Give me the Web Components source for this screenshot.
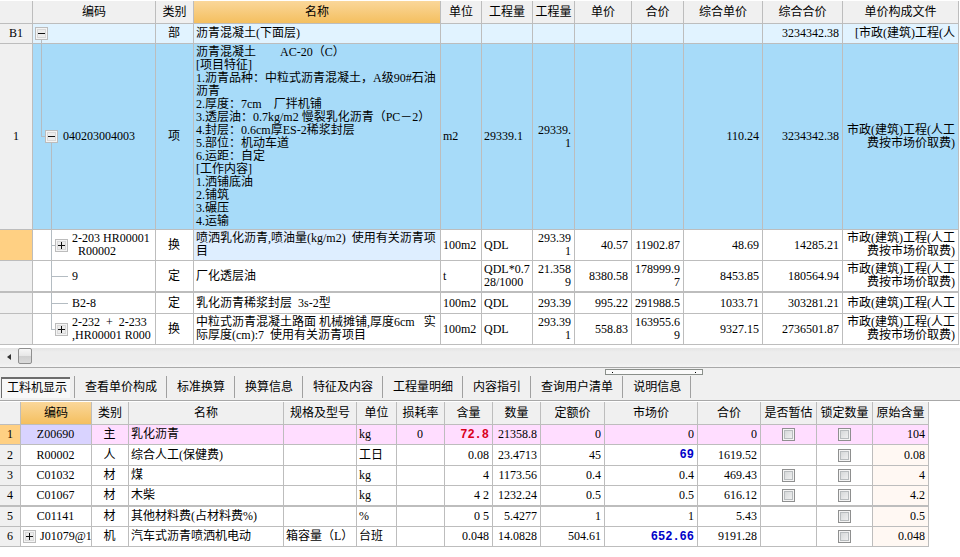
<!DOCTYPE html>
<html lang="zh-CN">
<head>
<meta charset="utf-8">
<title>工程量清单计价</title>
<style>
    body {
        margin: 0;
        background: #fff;
        color: #000;
        font: 12px/13px "Liberation Serif", "Noto Sans CJK SC", serif;
    }
</style>
</head>
<body>
<bill-grid></bill-grid>
<scroll-track></scroll-track>
<tab-panel>
    <tab-item active>工料机显示</tab-item>
    <tab-item>查看单价构成</tab-item>
    <tab-item>标准换算</tab-item>
    <tab-item>换算信息</tab-item>
    <tab-item>特征及内容</tab-item>
    <tab-item>工程量明细</tab-item>
    <tab-item>内容指引</tab-item>
    <tab-item>查询用户清单</tab-item>
    <tab-item>说明信息</tab-item>
</tab-panel>
<resource-grid></resource-grid>

<script>
// shared by both grids
const gridStyle = `
    :host {
        display: block;
    }
    table {
        table-layout: fixed;
        border-collapse: separate;
        border-spacing: 0;
    }
    th, td {
        box-sizing: border-box;
        padding: 0 3px 0 2px;
        border-right: 1px solid #bdbdbd;
        border-bottom: 1px solid #bdbdbd;
        overflow: hidden;
        white-space: pre;
        text-align: left;
        font-weight: normal;
        vertical-align: middle;
    }
    thead th {
        padding: 0;
        background: #f0f0f0;
        text-align: center;
    }
    thead th.current {
        background: linear-gradient(#fad79a, #f4bf5f);
    }
    tbody th {
        padding: 0;
        background: #f0f0f0;
        text-align: center;
    }
    .center { text-align: center; }
    .right { text-align: right; }
    tr.page td, tr.page th { border-bottom-width: 2px; }
`;

class TreeToggle extends HTMLElement {
    constructor() {
        super();
        this.attachShadow({ mode: 'open' });
    }

    connectedCallback() {
        const open = this.hasAttribute('open');
        this.shadowRoot.innerHTML = `
            <style>
                :host {
                    display: block;
                    flex: none;
                    white-space: normal;
                }
                button {
                    display: block;
                    width: 13px;
                    height: 13px;
                    padding: 0;
                    border: 0;
                    background: none;
                }
                svg { display: block; }
            </style>
            <button type="button" aria-label="${open ? '折叠' : '展开'}">
                <svg width="13" height="13" shape-rendering="crispEdges">
                    <rect width="13" height="13" fill="#bcbcbc"/>
                    <rect x="1" y="1" width="11" height="11" fill="#f4f4f4"/>
                    <rect x="2" y="2" width="9" height="9" fill="#d9d9d9"/>
                    <rect x="3" y="3" width="7" height="7" fill="#ececec"/>
                    <rect x="3" y="6" width="7" height="1" fill="#111"/>
                    ${open ? '' : '<rect x="6" y="3" width="1" height="7" fill="#111"/>'}
                </svg>
            </button>`;
    }
}

const nameText = [
    '沥青混凝土        AC-20（C）',
    '[项目特征]',
    '1.沥青品种：中粒式沥青混凝土，A级90#石油',
    '沥青',
    '2.厚度：7cm    厂拌机铺',
    '3.透层油：0.7kg/m2 慢裂乳化沥青（PC－2）',
    '4.封层：0.6cm厚ES-2稀浆封层',
    '5.部位：机动车道',
    '6.运距：自定',
    '[工作内容]',
    '1.洒铺底油',
    '2.铺筑',
    '3.碾压',
    '4.运输'
].join('\n');

const feeFile = '市政(建筑)工程(人工\n费按市场价取费)';

const billHeads = ['', '编码', '类别', '名称', '单位', '工程量', '工程量', '单价', '合价', '综合单价', '综合合价', '单价构成文件'];
const billWidths = [33, 123, 38, 0, 41, 51, 42, 57, 52, 79, 80, 116];
const billRows = [
    { cls: 'part', level: 'root', toggle: 'open', cells: ['B1', '', '部', '沥青混凝土(下面层)', '', '', '', '', '', '', '3234342.38', '[市政(建筑)工程(人'] },
    { cls: 'item', level: 'sub', toggle: 'open', cells: ['1', '040203004003', '项', nameText, 'm2', '29339.1', '29339.\n1', '', '', '110.24', '3234342.38', feeFile] },
    { cls: 'two active', level: 'leaf', toggle: 'closed', cells: ['', '2-203 HR00001\n  R00002', '换', '喷洒乳化沥青,喷油量(kg/m2)  使用有关沥青项\n目', '100m2', 'QDL', '293.39\n1', '40.57', '11902.87', '48.69', '14285.21', feeFile] },
    { cls: 'three page', level: 'leaf', cells: ['', '9', '定', '厂化透层油', 't', 'QDL*0.7\n28/1000', '21.358\n9', '8380.58', '178999.9\n7', '8453.85', '180564.94', feeFile] },
    { cls: 'one', level: 'leaf', cells: ['', 'B2-8', '定', '乳化沥青稀浆封层  3s-2型', '100m2', 'QDL', '293.39', '995.22', '291988.5', '1033.71', '303281.21', '市政(建筑)工程(人工'] },
    { cls: 'two', level: 'leaf last', toggle: 'closed', cells: ['', '2-232  +  2-233\n,HR00001 R000', '换', '中粒式沥青混凝土路面 机械摊铺,厚度6cm   实\n际厚度(cm):7  使用有关沥青项目', '100m2', 'QDL', '293.39\n1', '558.83', '163955.6\n9', '9327.15', '2736501.87', feeFile] }
];

class BillGrid extends HTMLElement {
    constructor() {
        super();
        this.attachShadow({ mode: 'open' });
    }

    connectedCallback() {
        const cols = billWidths.map(w => w ? `<col style="width: ${w}px">` : '<col>').join('');
        const heads = billHeads.map(h => `<th${h === '名称' ? ' class="current"' : ''}>${h}</th>`).join('');
        const rows = billRows.map(row => this.renderRow(row)).join('');
        this.shadowRoot.innerHTML = `
            <style>
                ${gridStyle}
                :host {
                    padding: 1px 1px 3px 0;
                }
                table { width: 100%; min-width: 860px; }
                thead tr { height: 23px; }
                tr.part { height: 20px; background: #e1f3ff; }
                tr.item { height: 186px; background: #a7dbf9; }
                tr.two { height: 31px; }
                tr.three { height: 32px; }
                tr.one { height: 21px; }
                tr.active th { background: #ffd083; }
                tr.active td.name { background: #deeeff; }

                /* tree lines, drawn behind the toggles */
                td.tree {
                    padding: 0;
                    background-repeat: no-repeat;
                    --line: linear-gradient(#b4bcc2, #b4bcc2);
                }
                .tree div { display: flex; align-items: center; }
                .root {
                    background-image: var(--line);
                    background-size: 1px 50%;
                    background-position: 8px 100%;
                }
                .root div { padding-left: 2px; }
                .sub {
                    background-image: var(--line), var(--line), var(--line);
                    background-size: 1px 50%, 5px 1px, 1px 50%;
                    background-position: 8px 0, 8px 50%, 18px 100%;
                }
                .sub div { padding-left: 12px; gap: 5px; }
                .leaf {
                    background-image: var(--line), var(--line);
                    background-size: 1px 100%, 17px 1px;
                    background-position: 18px 0, 18px 50%;
                }
                .leaf.last { background-size: 1px 50%, 17px 1px; }
                .leaf div { padding-left: 39px; }
                .leaf.toggled div { padding-left: 22px; gap: 4px; }
            </style>
            <table>
                <colgroup>${cols}</colgroup>
                <thead><tr>${heads}</tr></thead>
                <tbody>${rows}</tbody>
            </table>`;
    }

    renderRow(row) {
        const cells = row.cells.map((text, i) => {
            if (i === 0) return `<th scope="row">${text}</th>`;
            if (i === 1) {
                const toggle = row.toggle ? `<tree-toggle ${row.toggle}></tree-toggle>` : '';
                return `<td class="tree ${row.level}${row.toggle ? ' toggled' : ''}"><div>${toggle}<span>${text}</span></div></td>`;
            }
            const cls = i === 2 ? 'center' : i === 3 ? 'name' : i > 5 ? 'right' : '';
            return `<td class="${cls}">${text}</td>`;
        });
        return `<tr class="${row.cls}">${cells.join('')}</tr>`;
    }
}

class ScrollTrack extends HTMLElement {
    constructor() {
        super();
        this.attachShadow({ mode: 'open' });
        this.shadowRoot.innerHTML = `
            <style>
                :host {
                    display: flex;
                    height: 19px;
                    background: linear-gradient(#e3e3e3, #ededed 4px, #ededed 15px, #f4f4f4);
                    border-bottom: 1px solid #a8a8a8;
                }
                button {
                    box-sizing: border-box;
                    padding: 0;
                    border: 0;
                    background: none;
                }
                .arrow { width: 18px; height: 17px; }
                .arrow svg { display: block; margin: 0 auto; }
                .thumb {
                    width: 14px;
                    height: 16px;
                    border: 1px solid #8f8f8f;
                    border-radius: 2px;
                    background: linear-gradient(#f6f6f6, #e6e6e6 50%, #cfcfcf 51%, #dadada);
                }
            </style>
            <button class="arrow" type="button" aria-label="向左滚动">
                <svg width="4" height="6"><path d="M4 0v6L0 3z" fill="#333"/></svg>
            </button>
            <button class="thumb" type="button" aria-label="滚动滑块"></button>`;
    }
}

class TabItem extends HTMLElement {
    constructor() {
        super();
        this.attachShadow({ mode: 'open' });
        this.shadowRoot.innerHTML = `
            <style>
                :host {
                    display: flex;
                    align-items: center;
                    height: 22px;
                    padding: 0 9px;
                    border-right: 1px solid #a0a0a0;
                }
                button {
                    padding: 0;
                    border: 0;
                    background: none;
                    color: inherit;
                    font: inherit;
                    white-space: nowrap;
                }
                :host([active]) { padding: 0 4px 0 1px; }
                :host([active]) button {
                    height: 21px;
                    padding: 0 3px 0 5px;
                    border-top: 2px solid #6d6d6d;
                    border-left: 1px solid #6d6d6d;
                    background: #f8f8f8;
                }
            </style>
            <button type="button" role="tab"><slot></slot></button>`;
    }
}

class TabPanel extends HTMLElement {
    constructor() {
        super();
        this.attachShadow({ mode: 'open' });
        this.shadowRoot.innerHTML = `
            <style>
                :host {
                    display: block;
                    padding-top: 1px;
                    background: #f0f0f0;
                    border-bottom: 1px solid #a8a8a8;
                }
                .grip {
                    box-sizing: border-box;
                    display: flex;
                    justify-content: space-between;
                    align-items: center;
                    width: 98px;
                    height: 6px;
                    margin-left: 63%;
                    padding: 0 6px;
                    border: 1px solid #8a8f8a;
                    background: #fafafa;
                }
                .grip i { width: 1px; height: 1px; background: #000; }
                .tabs { display: flex; padding: 1px 0 2px; gap: 1px; }
            </style>
            <div class="grip"><i></i><i></i></div>
            <div class="tabs" role="tablist"><slot></slot></div>`;
    }
}

const resourceHeads = ['', '编码', '类别', '名称', '规格及型号', '单位', '损耗率', '含量', '数量', '定额价', '市场价', '合价', '是否暂估', '锁定数量', '原始含量'];
const resourceWidths = [21, 71, 37, 155, 73, 40, 48, 48, 48, 64, 93, 63, 56, 56, 56];
const box = true;
const resourceRows = [
    ['1', 'Z00690', '主', '乳化沥青', '', 'kg', '0', '<b class="red">72.8</b>', '21358.8', '0', '0', '0', box, box, '104'],
    ['2', 'R00002', '人', '综合人工(保健费)', '', '工日', '', '0.08', '23.4713', '45', '<b>69</b>', '1619.52', '', box, '0.08'],
    ['3', 'C01032', '材', '煤', '', 'kg', '', '4', '1173.56', '0.4', '0.4', '469.43', box, box, '4'],
    ['4', 'C01067', '材', '木柴', '', 'kg', '', '4 2', '1232.24', '0.5', '0.5', '616.12', box, box, '4.2'],
    ['5', 'C01141', '材', '其他材料费(占材料费%)', '', '%', '', '0 5', '5.4277', '1', '1', '5.43', '', box, '0.5'],
    ['6', 'J01079@1', '机', '汽车式沥青喷洒机电动', '箱容量（L）', '台班', '', '0.048', '14.0828', '504.61', '<b>652.66</b>', '9191.28', '', box, '0.048']
];

class ResourceGrid extends HTMLElement {
    constructor() {
        super();
        this.attachShadow({ mode: 'open' });
    }

    connectedCallback() {
        const cols = resourceWidths.map(w => `<col style="width: ${w}px">`).join('');
        const heads = resourceHeads.map(h => `<th${h === '编码' ? ' class="current"' : ''}>${h}</th>`).join('');
        const rows = resourceRows.map(row => this.renderRow(row)).join('');
        this.shadowRoot.innerHTML = `
            <style>
                ${gridStyle}
                :host { padding-top: 1px; }
                table { width: 929px; }
                thead tr { height: 23px; }
                tbody tr { height: 20px; }
                tbody tr.tall { height: 21px; }
                tr.picked td { background: #ffddff; }
                tr.picked th { background: #ffd083; }
                tr.picked td.code { background: #d9d3ff; }
                td.origin { background: #fff8f3; }
                .code div { display: flex; align-items: center; gap: 4px; }
                b {
                    color: #0000c8;
                    font-family: "Liberation Mono", monospace;
                }
                b.red { color: #d9001b; }
                input {
                    appearance: none;
                    display: block;
                    box-sizing: border-box;
                    width: 13px;
                    height: 13px;
                    margin: 0 auto;
                    border: 1px solid #8e8f8f;
                    background: linear-gradient(135deg, #cfd2d3, #f6f6f6);
                    box-shadow: inset 0 0 0 1px #f4f4f4, inset 0 0 0 2px #b8bcbe;
                }
            </style>
            <table>
                <colgroup>${cols}</colgroup>
                <thead><tr>${heads}</tr></thead>
                <tbody>${rows}</tbody>
            </table>`;
    }

    renderRow(row) {
        const cls = { 1: 'picked', 2: 'tall', 4: 'tall page' }[row[0]] || '';
        const cells = row.map((text, i) => {
            if (i === 0) return `<th scope="row">${text}</th>`;
            if (text === box) return `<td class="center"><input type="checkbox" aria-label="${resourceHeads[i]} ${row[1]}"></td>`;
            if (i === 1 && row[0] === '6') return `<td class="code"><div><tree-toggle></tree-toggle>${text}</div></td>`;
            if (i === 1) return `<td class="code center">${text}</td>`;
            if (i === 2 || i === 6) return `<td class="center">${text}</td>`;
            if (i === 14) return `<td class="right origin">${text}</td>`;
            return `<td class="${i > 6 ? 'right' : ''}">${text}</td>`;
        });
        return `<tr class="${cls}">${cells.join('')}</tr>`;
    }
}

window.customElements.define('tree-toggle', TreeToggle);
window.customElements.define('bill-grid', BillGrid);
window.customElements.define('scroll-track', ScrollTrack);
window.customElements.define('tab-item', TabItem);
window.customElements.define('tab-panel', TabPanel);
window.customElements.define('resource-grid', ResourceGrid);
</script>
</body>
</html>
